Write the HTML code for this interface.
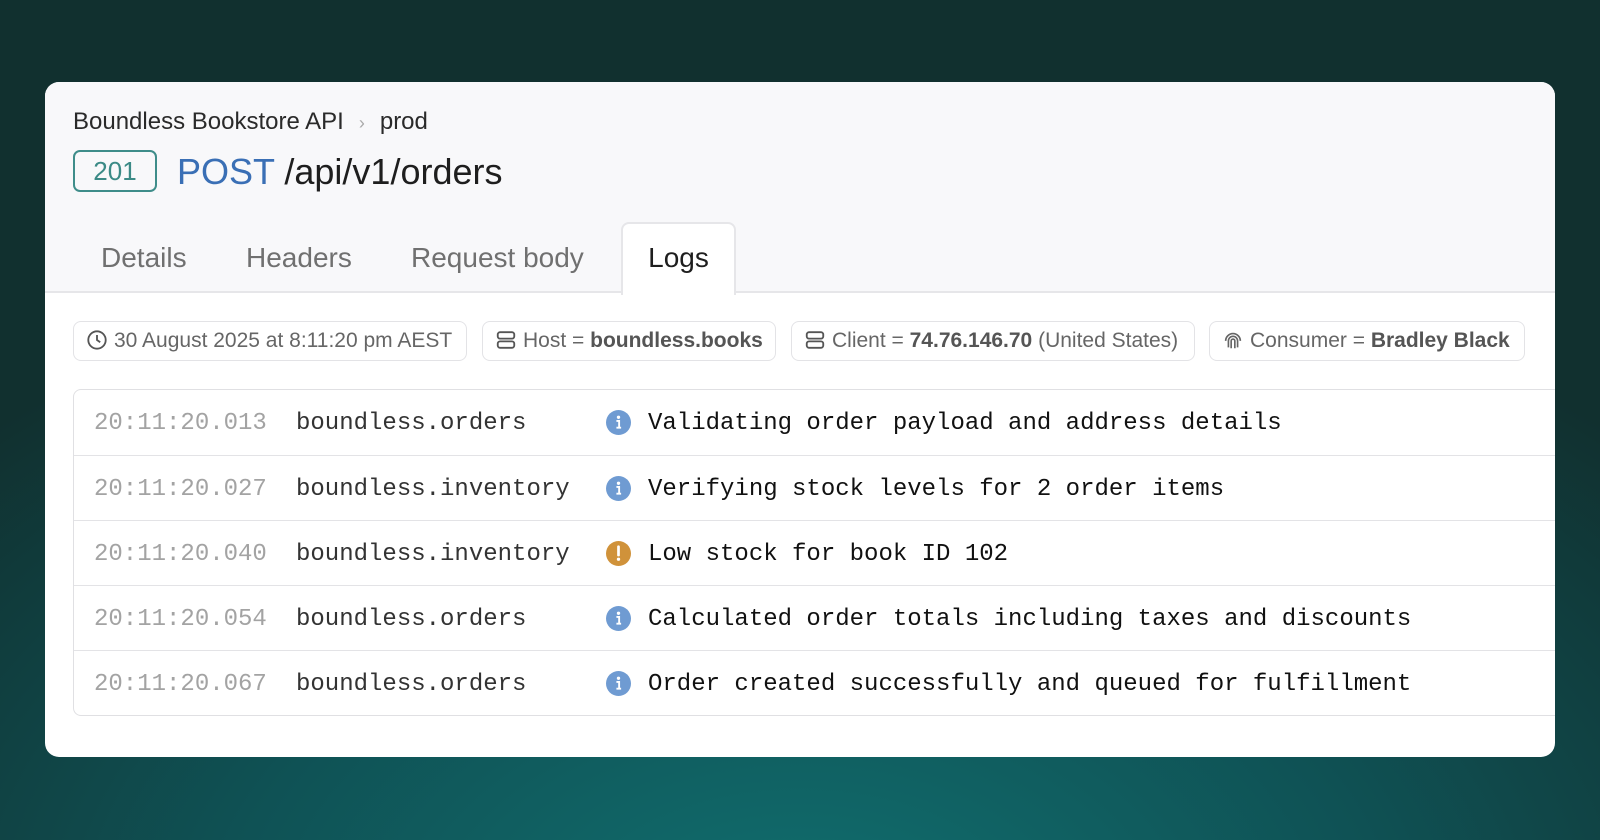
<!DOCTYPE html>
<html><head><meta charset="utf-8"><style>
*{box-sizing:border-box;margin:0;padding:0}
html,body{width:1600px;height:840px;overflow:hidden}
body{background:radial-gradient(ellipse 1150px 720px at 50% 112%,#117070 0%,#0f5255 50%,#11302f 100%);font-family:"Liberation Sans",sans-serif;position:relative}
.card{position:absolute;left:45px;top:82px;width:1510px;height:675px;background:#fff;border-radius:14px;overflow:hidden}
.head{background:#f8f8fa;height:211px;border-bottom:2px solid #e6e6e9;position:relative}
.bc{position:absolute;left:28px;top:26px;font-size:24px;color:#2a2a2a}
.bc .sep{color:#aaa;margin:0 15px;font-size:18px}
.badge{position:absolute;left:28px;top:68px;width:84px;height:42px;border:2px solid #3f8d8a;border-radius:7px;color:#3b8a86;font-size:26px;text-align:center;line-height:39px}
.title{position:absolute;left:132px;top:69px;font-size:36px;color:#1e1e1e}
.title b{font-weight:normal;color:#3a6fb5}
.tab{position:absolute;top:160px;font-size:28px;color:#707070}
.logs{position:absolute;left:576px;top:140px;width:115px;height:73px;background:#fff;border:2px solid #e6e6e9;border-bottom:none;border-radius:8px 8px 0 0;font-size:28px;color:#1e1e1e;text-align:center;padding-top:18px}
.chip{position:absolute;top:239px;height:40px;border:1.5px solid #e3e3e6;border-radius:8px;font-size:21px;color:#666;line-height:37px;padding-left:12px;white-space:nowrap}
.chip b{color:#555}
.chip svg{vertical-align:-4px;margin-right:6px}
.tbl{position:absolute;left:28px;top:307px;width:1500px;border:1.5px solid #e0e0e3;border-radius:8px 0 0 8px}
.row{height:65px;border-top:1.5px solid #e3e3e6;position:relative;font-family:"Liberation Mono",monospace;font-size:24px;line-height:67px;white-space:nowrap}
.row:first-child{border-top:none}
.t{position:absolute;left:20px;color:#a3a3a3}
.s{position:absolute;left:222px;color:#333}
.i{position:absolute;left:532px;top:20px}
.m{position:absolute;left:574px;color:#111}
</style></head><body>
<div class="card">
 <div class="head">
  <div class="bc">Boundless Bookstore API<span class="sep">›</span>prod</div>
  <div class="badge">201</div>
  <div class="title"><b>POST</b> /api/v1/orders</div>
  <div class="tab" style="left:56px">Details</div>
  <div class="tab" style="left:201px">Headers</div>
  <div class="tab" style="left:366px">Request body</div>
  <div class="logs">Logs</div>
 </div>
 <div class="chip" style="left:28px;width:394px"><svg width="22" height="22" viewBox="0 0 24 24" fill="none" stroke="#555" stroke-width="2"><circle cx="12" cy="12" r="9.5"/><path d="M12 6.5V12l3.5 2.5"/></svg>30 August 2025 at 8:11:20 pm AEST</div>
 <div class="chip" style="left:437px;width:294px"><svg width="22" height="22" viewBox="0 0 24 24" fill="none" stroke="#555" stroke-width="2"><rect x="3" y="3.5" width="18" height="7" rx="2.5"/><rect x="3" y="13.5" width="18" height="7" rx="2.5"/></svg>Host = <b>boundless.books</b></div>
 <div class="chip" style="left:746px;width:404px"><svg width="22" height="22" viewBox="0 0 24 24" fill="none" stroke="#555" stroke-width="2"><rect x="3" y="3.5" width="18" height="7" rx="2.5"/><rect x="3" y="13.5" width="18" height="7" rx="2.5"/></svg>Client = <b>74.76.146.70</b> (United States)</div>
 <div class="chip" style="left:1164px;width:316px"><svg width="22" height="22" viewBox="0 0 24 24" fill="none" stroke="#666" stroke-width="1.8"><path d="M4 13a8 8 0 0 1 16 0M7 20v-7a5 5 0 0 1 10 0v7M10 21v-8a2 2 0 0 1 4 0v8"/></svg>Consumer = <b>Bradley Black</b></div>
 <div class="tbl">
  <div class="row"><span class="t">20:11:20.013</span><span class="s">boundless.orders</span><svg class="i" width="25" height="25" viewBox="0 0 24 24"><circle cx="12" cy="12" r="12" fill="#6f9bd2"/><circle cx="12" cy="7" r="1.6" fill="#fff"/><path d="M10 10.5h2.6v6.5M10 17h4.5" stroke="#fff" stroke-width="1.8" fill="none"/></svg><span class="m">Validating order payload and address details</span></div>
  <div class="row"><span class="t">20:11:20.027</span><span class="s">boundless.inventory</span><svg class="i" width="25" height="25" viewBox="0 0 24 24"><circle cx="12" cy="12" r="12" fill="#6f9bd2"/><circle cx="12" cy="7" r="1.6" fill="#fff"/><path d="M10 10.5h2.6v6.5M10 17h4.5" stroke="#fff" stroke-width="1.8" fill="none"/></svg><span class="m">Verifying stock levels for 2 order items</span></div>
  <div class="row"><span class="t">20:11:20.040</span><span class="s">boundless.inventory</span><svg class="i" width="25" height="25" viewBox="0 0 24 24"><circle cx="12" cy="12" r="12" fill="#d0923a"/><path d="M12 5.5v8" stroke="#fff" stroke-width="2.6" stroke-linecap="round"/><circle cx="12" cy="17.5" r="1.6" fill="#fff"/></svg><span class="m">Low stock for book ID 102</span></div>
  <div class="row"><span class="t">20:11:20.054</span><span class="s">boundless.orders</span><svg class="i" width="25" height="25" viewBox="0 0 24 24"><circle cx="12" cy="12" r="12" fill="#6f9bd2"/><circle cx="12" cy="7" r="1.6" fill="#fff"/><path d="M10 10.5h2.6v6.5M10 17h4.5" stroke="#fff" stroke-width="1.8" fill="none"/></svg><span class="m">Calculated order totals including taxes and discounts</span></div>
  <div class="row"><span class="t">20:11:20.067</span><span class="s">boundless.orders</span><svg class="i" width="25" height="25" viewBox="0 0 24 24"><circle cx="12" cy="12" r="12" fill="#6f9bd2"/><circle cx="12" cy="7" r="1.6" fill="#fff"/><path d="M10 10.5h2.6v6.5M10 17h4.5" stroke="#fff" stroke-width="1.8" fill="none"/></svg><span class="m">Order created successfully and queued for fulfillment</span></div>
 </div>
</div>
</body></html>
